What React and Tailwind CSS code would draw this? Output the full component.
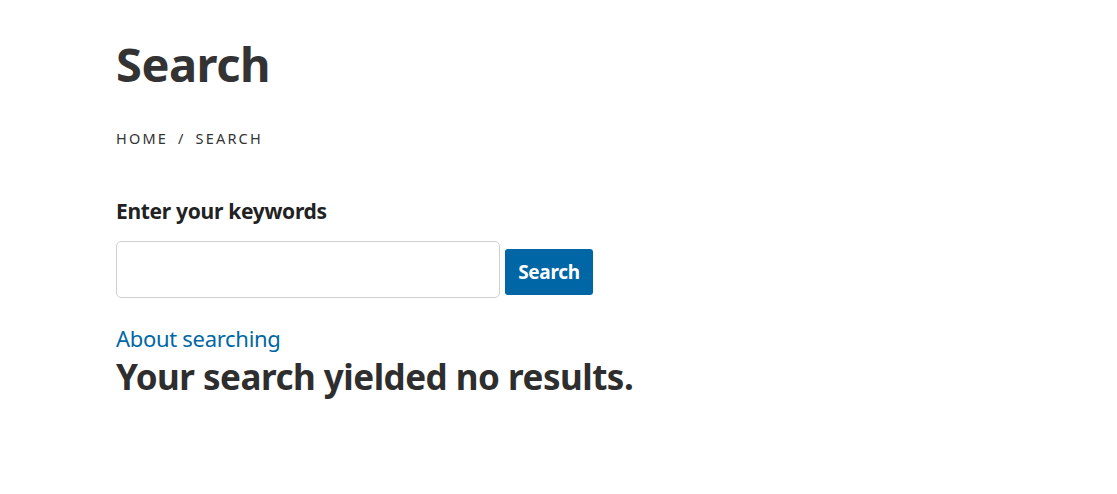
import React from 'react'

export default function App() {
  return (
    <div className="min-h-screen bg-white text-[#333]" style={{ fontFamily: '"Noto Sans", "Open Sans", sans-serif' }}>
      <main className="px-[116px] pt-[28px]">
        <h1 className="text-[47px] font-bold leading-[72px] tracking-[-0.5px] text-[#333]">Search</h1>

        <nav className="mt-[28px] text-[14.5px] uppercase tracking-[0.15em] text-[#333]">
          <a href="#" className="text-[#333]">Home</a>
          <span className="mx-[10px]">/</span>
          <span>Search</span>
        </nav>

        <form className="mt-[46px]" onSubmit={(e) => e.preventDefault()}>
          <label htmlFor="keys" className="block text-[21px] font-bold leading-[30px] text-[#222] tracking-[-0.3px]">
            Enter your keywords
          </label>
          <div className="mt-[15px] flex items-start gap-[5px]">
            <input
              id="keys"
              type="text"
              className="h-[57px] w-[384px] rounded-[5px] border border-[#d0d0d0] px-3 text-[18px] outline-none"
            />
            <button
              type="submit"
              className="mt-[8px] h-[46px] w-[88px] rounded-[3px] bg-[#0066a6] text-[19px] font-bold text-white tracking-[-0.3px]"
            >
              Search
            </button>
          </div>
        </form>

        <a href="#" className="mt-[25px] block text-[22px] leading-[30px] text-[#0067a5] tracking-[-0.3px]">
          About searching
        </a>
        <h2 className="mt-[3px] text-[35px] font-bold leading-[42px] text-[#2e2e2e] tracking-[-0.5px]">
          Your search yielded no results.
        </h2>
      </main>
    </div>
  )
}
